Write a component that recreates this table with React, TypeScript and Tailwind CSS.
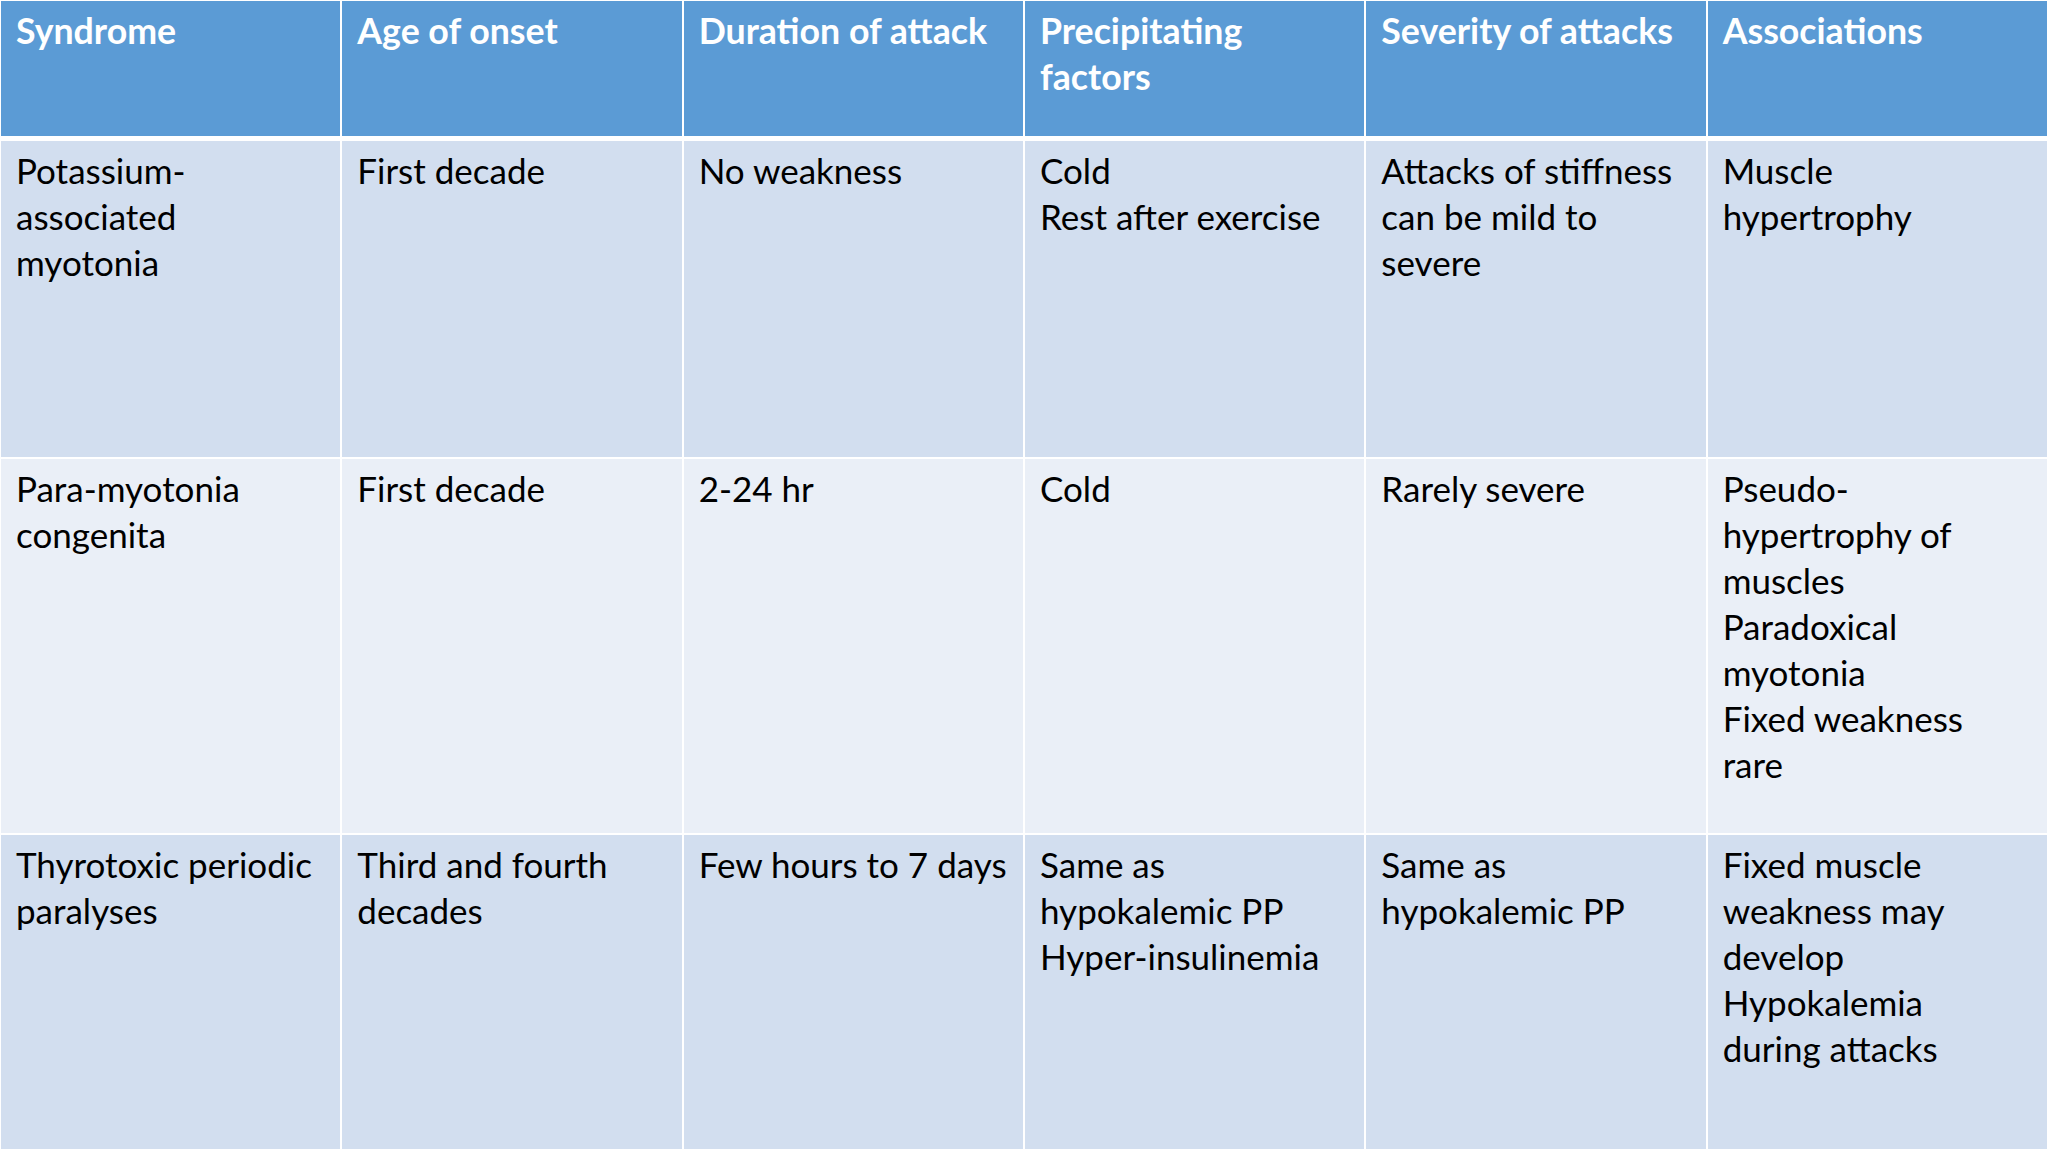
const header = [
  ["Syndrome"],
  ["Age of onset"],
  ["Duration of attack"],
  ["Precipitating", "factors"],
  ["Severity of attacks"],
  ["Associations"],
];

const rows: { tone: string; height: string; cells: string[][] }[] = [
  {
    tone: "bg-[#d2deef]",
    height: "h-[316px]",
    cells: [
      ["Potassium-", "associated", "myotonia"],
      ["First decade"],
      ["No weakness"],
      ["Cold", "Rest after exercise"],
      ["Attacks of stiffness", "can be mild to", "severe"],
      ["Muscle", "hypertrophy"],
    ],
  },
  {
    tone: "bg-[#eaeff7]",
    height: "h-[374px]",
    cells: [
      ["Para-myotonia", "congenita"],
      ["First decade"],
      ["2-24 hr"],
      ["Cold"],
      ["Rarely severe"],
      ["Pseudo-", "hypertrophy of", "muscles", "Paradoxical", "myotonia", "Fixed weakness", "rare"],
    ],
  },
  {
    tone: "bg-[#d2deef]",
    height: "h-[314px]",
    cells: [
      ["Thyrotoxic periodic", "paralyses"],
      ["Third and fourth", "decades"],
      ["Few hours to 7 days"],
      ["Same as", "hypokalemic PP", "Hyper-insulinemia"],
      ["Same as", "hypokalemic PP"],
      ["Fixed muscle", "weakness may", "develop", "Hypokalemia", "during attacks"],
    ],
  },
];

function Cell({ lines, className }: { lines: string[]; className: string }) {
  return (
    <div className={`pl-[15px] pr-[10px] ${className}`}>
      {lines.map((line, i) => (
        <div key={i} className="whitespace-nowrap leading-[46px]">
          {line}
        </div>
      ))}
    </div>
  );
}

export default function App() {
  return (
    <div
      className="w-[2048px] h-[1152px] overflow-hidden bg-white p-[1px]"
      style={{ fontFamily: "Lato, 'Open Sans', sans-serif" }}
    >
      <div className="grid grid-cols-6 gap-x-[2px] h-[135px]">
        {header.map((lines, i) => (
          <Cell key={i} lines={lines} className="bg-[#5b9bd5] pt-[7px] text-[35.7px] font-bold text-white" />
        ))}
      </div>
      {rows.map((row, r) => (
        <div key={r} className={`grid grid-cols-6 gap-x-[2px] ${row.height} ${r === 0 ? "mt-[5px]" : "mt-[2px]"}`}>
          {row.cells.map((lines, i) => (
            <Cell key={i} lines={lines} className={`${row.tone} pt-[6px] text-[35px] text-black`} />
          ))}
        </div>
      ))}
    </div>
  );
}
